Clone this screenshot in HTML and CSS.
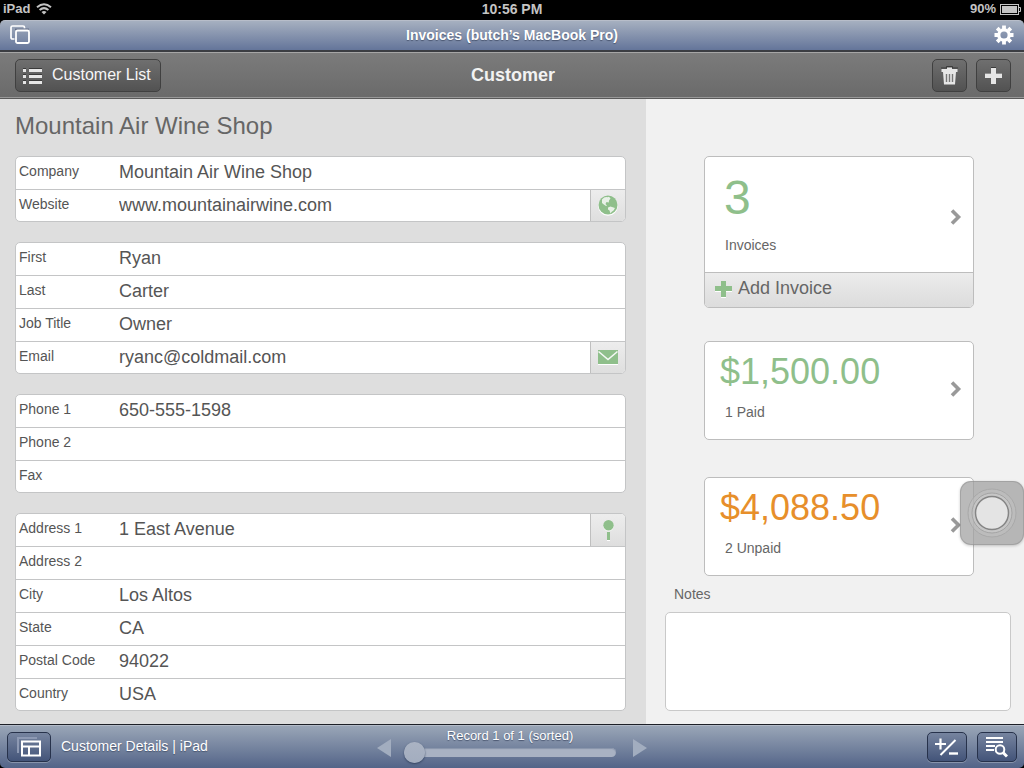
FILE: index.html
```html
<!DOCTYPE html>
<html lang="en">
<head>
<meta charset="utf-8">
<meta name="viewport" content="width=device-width, initial-scale=1">
<title>Invoices</title>
<link rel="stylesheet" href="styles.css">
</head>
<body>
<div class="status">
  <div class="status-side">iPad
    <svg width="16" height="12" viewBox="0 0 16 12" fill="none" stroke="#c4c4c4" stroke-width="2" aria-hidden="true"><path d="M1 4.2Q8-1.6 15 4.2M3.6 6.9Q8 3.3 12.4 6.9"/><path d="M5.500 9Q8 7 10.500 9L8 11.600Z" fill="#c4c4c4" stroke="none"/></svg>
  </div>
  <div class="status-time">10:56 PM</div>
  <div class="status-side status-end">90%
    <svg width="21" height="11" viewBox="0 0 21 11" aria-hidden="true"><rect x=".5" y=".5" width="18" height="10" fill="none" stroke="#c4c4c4"/><rect x="2" y="2" width="15" height="7" fill="#c4c4c4"/><path d="M19 3.500h1.500v4H19" fill="none" stroke="#c4c4c4"/></svg>
  </div>
</div>

<header class="titlebar">
  <button class="plain" type="button" aria-label="Windows">
    <svg width="20" height="20" viewBox="0 0 20 20" fill="none" aria-hidden="true"><path d="M4.500 14H2.500a1.500 1.500 0 0 1-1.500-1.500v-10A1.500 1.500 0 0 1 2.500 1h10.500a1.500 1.500 0 0 1 1.500 1.500V3.500" stroke="#fff" stroke-width="1.700"/><path d="M5 4.200h14" stroke="#4a5670"/><rect x="6" y="5.500" width="13" height="12.500" rx="1.500" stroke="#fff" stroke-width="1.800"/></svg>
  </button>
  <h1 class="window-title">Invoices (butch’s MacBook Pro)</h1>
  <button class="plain end" type="button" aria-label="Settings">
    <svg width="20" height="20" viewBox="-10 -10 20 20" aria-hidden="true"><g fill="none" stroke="#fff"><circle r="5.200" stroke-width="3.200"/><path stroke-width="3.800" d="M0-6V-9.500M0 6V9.500M-6 0H-9.500M6 0H9.500M-4.300-4.300L-6.800-6.800M4.300-4.300L6.800-6.800M-4.300 4.300L-6.800 6.800M4.300 4.300L6.800 6.800"/></g></svg>
  </button>
</header>

<nav class="toolbar">
  <button class="tool tool-list" type="button">
    <svg width="20" height="16" viewBox="0 0 20 16" fill="#e6e6e6" aria-hidden="true"><path d="M0 1h3v3H0zM6 1h13v3H6zM0 7h3v3H0zM6 7h13v3H6zM0 13h3v3H0zM6 13h13v3H6z"/><path d="M0 0h3v1H0zM6 0h13v1H6zM0 6h3v1H0zM6 6h13v1H6zM0 12h3v1H0zM6 12h13v1H6z" fill="#3a3a3a"/></svg>
    <span class="tool-text">Customer List</span>
  </button>
  <h2 class="screen-title">Customer</h2>
  <div class="tool-group">
    <button class="tool tool-icon" type="button" aria-label="Delete">
      <svg width="17" height="19" viewBox="0 0 17 19" aria-hidden="true"><path d="M5.500 2V.5h6V2M0 2h17" stroke="#3a3a3a" fill="none"/><path fill="#e6e6e6" d="M6 3V1.500h5V3h5.500v3H15l-1 12.500H3L2 6H.5V3z"/><path d="M5.500 8v8M8.500 8v8M11.500 8v8" stroke="#777" stroke-width="1.400"/></svg>
    </button>
    <button class="tool tool-icon" type="button" aria-label="Add">
      <svg width="17" height="17" viewBox="0 0 17 17" aria-hidden="true"><path fill="#3a3a3a" d="M6 0h5v6h6v2H0V6h6z"/><path fill="#e6e6e6" d="M6 1h5v5.500h6v4.500h-6v6H6v-6H0V6.500h6z"/></svg>
    </button>
  </div>
</nav>

<main class="content">
  <form class="details">
    <h2 class="customer-name">Mountain Air Wine Shop</h2>

    <div class="group">
      <div class="row"><label for="company">Company</label><input id="company" value="Mountain Air Wine Shop"></div>
      <div class="row"><label for="website">Website</label><input id="website" value="www.mountainairwine.com">
        <button class="row-action" type="button" aria-label="Open website">
          <svg width="20" height="21" viewBox="0 0 20 21" aria-hidden="true"><circle cx="10" cy="11" r="9.800" fill="#fff"/><circle cx="10" cy="10" r="9.500" fill="#8fbf8b"/><path fill="#e9f1e8" d="M4 4.500Q6.500 1.500 9.500 2.200L11 1.800 12.500 3.500 11 5.500 10.800 7.500 8.500 7 7.500 9 9 10.500 8 11 5.800 9.500 4 8zM10 12.500L12.500 11.500 17 13 15.500 15.500 13.500 17 12.500 18.500 11.500 15.500 10 14.500z"/></svg>
        </button>
      </div>
    </div>

    <div class="group">
      <div class="row"><label for="first">First</label><input id="first" value="Ryan"></div>
      <div class="row"><label for="last">Last</label><input id="last" value="Carter"></div>
      <div class="row"><label for="job">Job Title</label><input id="job" value="Owner"></div>
      <div class="row"><label for="email">Email</label><input id="email" value="ryanc@coldmail.com">
        <button class="row-action" type="button" aria-label="Send email">
          <svg width="20" height="15" viewBox="0 0 20 15" aria-hidden="true"><path fill="#fff" d="M0 13h20v2H0z"/><path fill="#8fbf8b" d="M0 0h20v14H0z"/><path fill="none" stroke="#f4f8f4" stroke-width="1.600" d="M.5 1.500L10 9.500 19.500 1.500"/></svg>
        </button>
      </div>
    </div>

    <div class="group">
      <div class="row"><label for="phone1">Phone 1</label><input id="phone1" value="650-555-1598"></div>
      <div class="row"><label for="phone2">Phone 2</label><input id="phone2"></div>
      <div class="row"><label for="fax">Fax</label><input id="fax"></div>
    </div>

    <div class="group">
      <div class="row"><label for="address1">Address 1</label><input id="address1" value="1 East Avenue">
        <button class="row-action" type="button" aria-label="Show on map">
          <svg width="11" height="21" viewBox="0 0 11 21" aria-hidden="true"><path fill="#fff" d="M4 12h3v9H4z"/><circle cx="5.500" cy="6" r="5.200" fill="#fff"/><circle cx="5.500" cy="5.200" r="5.200" fill="#8fbf8b"/><path fill="#8fbf8b" d="M4 12h3v8H4z"/></svg>
        </button>
      </div>
      <div class="row"><label for="address2">Address 2</label><input id="address2"></div>
      <div class="row"><label for="city">City</label><input id="city" value="Los Altos"></div>
      <div class="row"><label for="state">State</label><input id="state" value="CA"></div>
      <div class="row"><label for="postal">Postal Code</label><input id="postal" value="94022"></div>
      <div class="row"><label for="country">Country</label><input id="country" value="USA"></div>
    </div>
  </form>

  <aside class="summary">
    <div class="card card-invoices">
      <a class="card-link" href="#invoices">
        <span class="card-text"><span class="count">3</span><span class="caption">Invoices</span></span>
        <svg class="chevron-low" width="12" height="16" viewBox="0 0 12 16" aria-hidden="true"><path d="M2 1.500L8.500 8 2 14.500" fill="none" stroke="#999" stroke-width="3.600"/></svg>
      </a>
      <button class="add" type="button">
        <svg width="17" height="18" viewBox="0 0 17 18" aria-hidden="true"><path fill="#fff" d="M6 2h5v5h6v5h-6v6H6v-6H0V7h6z"/><path fill="#8fbf8b" d="M6 1h5v5h6v5h-6v6H6v-6H0V6h6z"/></svg>
        <span class="add-text">Add Invoice</span>
      </button>
    </div>
    <div class="card card-paid">
      <a class="card-link" href="#paid">
        <span class="card-text"><span class="amount">$1,500.00</span><span class="caption">1 Paid</span></span>
        <svg class="chevron-high" width="12" height="16" viewBox="0 0 12 16" aria-hidden="true"><path d="M2 1.500L8.500 8 2 14.500" fill="none" stroke="#999" stroke-width="3.600"/></svg>
      </a>
    </div>
    <div class="card">
      <a class="card-link" href="#unpaid">
        <span class="card-text"><span class="amount amount-due">$4,088.50</span><span class="caption">2 Unpaid</span></span>
        <svg class="chevron-high" width="12" height="16" viewBox="0 0 12 16" aria-hidden="true"><path d="M2 1.500L8.500 8 2 14.500" fill="none" stroke="#999" stroke-width="3.600"/></svg>
      </a>
    </div>
    <label class="notes-label" for="notes">Notes</label>
    <textarea class="notes" id="notes"></textarea>
  </aside>
</main>

<footer class="bottombar">
  <div class="bottom-left">
    <button class="blue blue-wide" type="button" aria-label="Change layout">
      <svg width="24" height="20" viewBox="0 0 24 20" aria-hidden="true"><path d="M1 16V1h19" fill="none" stroke="#8d99b3" stroke-width="2"/><path d="M5 4.500h18v14H5zM5 9.500h18M12 10v8" fill="none" stroke="#fff" stroke-width="2"/></svg>
    </button>
    <span class="layout-name">Customer Details | iPad</span>
  </div>
  <div class="records">
    <button class="plain" type="button" aria-label="Previous record"><svg width="14" height="18" viewBox="0 0 14 18" aria-hidden="true"><path d="M14 0v18L0 9z" fill="#a2adbf"/></svg></button>
    <div class="record-slider">
      <label for="record">Record 1 of 1 (sorted)</label>
      <input id="record" type="range" min="1" max="2" value="1">
    </div>
    <button class="plain next" type="button" aria-label="Next record"><svg width="14" height="18" viewBox="0 0 14 18" aria-hidden="true"><path d="M0 0v18L14 9z" fill="#a2adbf"/></svg></button>
  </div>
  <div class="bottom-right">
    <button class="blue" type="button" aria-label="Add or delete record">
      <svg width="24" height="18" viewBox="0 0 24 18" fill="none" stroke="#fff" aria-hidden="true"><path d="M0 6h11M5.500.5v11" stroke-width="2.200"/><path d="M5.500 17L20.500 2" stroke-width="2"/><path d="M14 15.500h9" stroke-width="2.400"/></svg>
    </button>
    <button class="blue" type="button" aria-label="Find records">
      <svg width="22" height="22" viewBox="0 0 22 22" fill="none" stroke="#fff" aria-hidden="true"><path d="M0 2h17M0 6h17M0 10h9M0 14h8" stroke-width="2.200"/><circle cx="14" cy="13.500" r="4.300" stroke-width="2"/><path d="M17 16.500l4 4" stroke-width="3"/></svg>
    </button>
  </div>
</footer>

<button class="assistive" type="button" aria-label="AssistiveTouch">
  <svg width="64" height="64" viewBox="0 0 64 64" aria-hidden="true"><circle cx="32" cy="32" r="24" fill="#c4c4c4" fill-opacity=".5" stroke="#a8a8a8"/><circle cx="32" cy="32" r="20" fill="#cbcbcb" fill-opacity=".6" stroke="#a4a4a4"/><circle cx="32" cy="32" r="16.500" fill="#e4e4e4" stroke="#858585" stroke-width="1.500"/></svg>
</button>
</body>
</html>
```
FILE: styles.css
```css
* { box-sizing: border-box; }

body {
  margin: 0;
  min-height: 100vh;
  display: flex;
  flex-direction: column;
  background: #000;
  font-family: "Liberation Sans", Arial, Helvetica, sans-serif;
  color: #555;
}

h1, h2 { margin: 0; }
svg { display: block; flex: none; }
button, input, textarea { font: inherit; color: inherit; margin: 0; }
button { cursor: pointer; }
.plain { display: flex; padding: 0; border: 0; background: none; }

.status, .titlebar, .toolbar, .bottombar {
  display: grid;
  grid-template-columns: 1fr auto 1fr;
  align-items: center;
}

.status {
  height: 20px;
  padding: 0 3px 2px;
  font-size: 13px;
  font-weight: bold;
  line-height: 18px;
  color: #c4c4c4;
}
.status-time { font-size: 14px; }
.status-side { display: flex; align-items: center; gap: 6px; }
.status-end { justify-content: flex-end; gap: 4px; }

.titlebar {
  height: 32px;
  padding: 0 10px 2px;
  border-top: 1px solid #b7bdc9;
  border-bottom: 2px solid #3b3d42;
  border-radius: 5px 5px 0 0;
  background: linear-gradient(#a6b0c0, #64759a);
}
.window-title {
  font-size: 14px;
  line-height: 18px;
  color: #fff;
  text-shadow: 0 1px 1px #4a5670;
}
.end { justify-self: end; }

.toolbar {
  height: 47px;
  padding: 0 13px 0 15px;
  border-top: 1px solid #a6a6a6;
  border-bottom: 1px solid #5a5a5a;
  box-shadow: inset 0 -1px #999;
  background: linear-gradient(#7b7b7b, #6a6a6a);
}
.screen-title {
  padding-bottom: 2px;
  font-size: 18px;
  line-height: 22px;
  color: #f2f2f2;
}
.tool {
  display: flex;
  align-items: center;
  justify-content: center;
  height: 33px;
  border: 1px solid #404040;
  border-radius: 5px;
  background: linear-gradient(#6f6f6f, #525252);
  color: #f6f6f6;
}
.tool-list { justify-self: start; gap: 9px; padding: 0 9px 0 7px; font-size: 16px; }
.tool-text { padding-bottom: 2px; }
.tool-icon { width: 35px; padding: 0; }
.tool-group { display: flex; justify-self: end; gap: 9px; }

.content {
  flex: 1;
  display: grid;
  grid-template-columns: 646fr 378fr;
}

.details {
  display: flex;
  flex-direction: column;
  gap: 20px;
  padding: 13px 20px 13px 15px;
  background: #dedede;
}
.customer-name {
  margin-bottom: -4px;
  font-size: 24px;
  font-weight: normal;
  line-height: 28px;
  color: #666;
}
.group {
  border: 1px solid #c4c5c6;
  border-radius: 5px;
  overflow: hidden;
  background: #fff;
}
.row { display: flex; height: 33px; }
.row:not(:last-child) { border-bottom: 1px solid #c4c5c6; }
.row:last-child { height: 31px; }
.row label {
  width: 103px;
  padding: 5px 0 0 3px;
  font-size: 14px;
  line-height: 18px;
}
.row input {
  flex: 1;
  min-width: 0;
  height: 31px;
  padding: 0;
  border: 0;
  outline: 0;
  background: none;
  font-size: 18px;
}
.row-action {
  display: flex;
  align-items: center;
  justify-content: center;
  width: 35px;
  padding: 0;
  border: 0;
  border-left: 1px solid #bfbfbf;
  background: linear-gradient(#ededed, #dedede);
}

.summary {
  display: flex;
  flex-direction: column;
  padding: 57px 13px 13px 19px;
  background: #f1f1f1;
}
.card {
  margin: 0 37px 0 39px;
  border: 1px solid #bdbdbd;
  border-radius: 5px;
  overflow: hidden;
  background: #fff;
}
.card-invoices { margin-bottom: 33px; }
.card-paid { margin-bottom: 37px; }
.card-link {
  display: flex;
  align-items: center;
  justify-content: space-between;
  padding: 0 11px 0 15px;
  color: #666;
  text-decoration: none;
}
.card-text { display: flex; flex-direction: column; }
.chevron-low { margin-top: 4px; }
.chevron-high { margin-bottom: 4px; }
.count { padding: 14px 0 0 4px; font-size: 48px; line-height: 54px; color: #8fbf8b; }
.amount { padding-top: 10px; font-size: 36px; line-height: 40px; color: #8fbf8b; }
.amount-due { color: #e78f2b; }
.caption { padding: 11px 0 18px 5px; font-size: 14px; line-height: 18px; }
.add {
  display: flex;
  align-items: center;
  gap: 6px;
  width: 100%;
  height: 35px;
  padding: 0 10px 2px;
  border: 0;
  border-top: 1px solid #bdbdbd;
  background: linear-gradient(#ececec, #dcdcdc);
  font-size: 18px;
  color: #666;
}
.add-text { padding-bottom: 2px; }
.notes-label { padding: 9px 0 9px 9px; font-size: 14px; line-height: 18px; color: #666; }
.notes {
  flex: 1;
  min-height: 99px;
  width: 100%;
  border: 1px solid #c9c9c9;
  border-radius: 5px;
  resize: none;
  background: #fff;
  font-size: 18px;
}

.bottombar {
  height: 44px;
  padding: 0 7px;
  border-top: 1px solid #1d2028;
  border-radius: 0 0 5px 5px;
  box-shadow: inset 0 1px #b3bbc8;
  background: linear-gradient(#9ba7b8, #536488);
  color: #fff;
  font-size: 14px;
  text-shadow: 0 1px 1px #4a5670;
}
.bottom-left, .bottom-right { display: flex; align-items: center; gap: 10px; }
.bottom-right { justify-content: flex-end; }
.layout-name { padding-bottom: 1px; }
.blue {
  display: flex;
  align-items: center;
  justify-content: center;
  width: 40px;
  height: 30px;
  padding: 0;
  border: 1px solid #27324b;
  border-radius: 5px;
  box-shadow: 0 1px #8793ab;
  background: linear-gradient(#76849f, #435479);
}
.blue-wide { width: 44px; }
.records { display: flex; align-items: center; gap: 13px; padding-top: 3px; }
.next { margin-left: 4px; }
.record-slider { width: 212px; display: flex; flex-direction: column; align-items: center; margin-top: -5px; }
.record-slider label { font-size: 13px; line-height: 14px; }
.record-slider input {
  appearance: none;
  width: 100%;
  height: 21px;
  margin-top: -1px;
  background: none;
}
.record-slider input::-webkit-slider-runnable-track {
  height: 9px;
  border-radius: 5px;
  background: #a9b2c3;
  box-shadow: inset 0 1px 1px #8793aa;
}
.record-slider input::-webkit-slider-thumb {
  appearance: none;
  width: 21px;
  height: 21px;
  margin-top: -6px;
  border-radius: 50%;
  background: linear-gradient(#aab3c3, #a3adbf);
  box-shadow: 0 1px 2px #34435f;
}

.assistive {
  position: fixed;
  right: 0;
  top: 481px;
  padding: 0;
  border: 0;
  border-radius: 11px;
  overflow: hidden;
  background: rgba(160, 160, 160, .72);
  box-shadow: inset 0 0 0 1px rgba(130, 130, 130, .4), 0 1px 3px rgba(0, 0, 0, .2);
}
```
